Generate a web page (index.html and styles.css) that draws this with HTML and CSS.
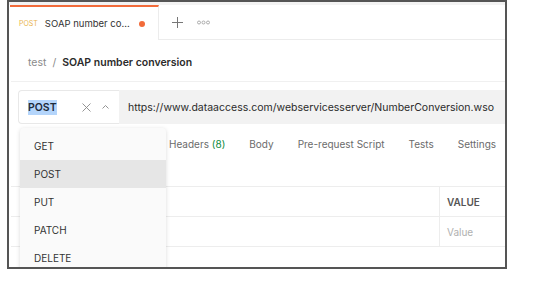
FILE: index.html
```html
<!DOCTYPE html>
<html lang="en">
<head>
    <meta charset="UTF-8">
    <title>SOAP number conversion</title>
    <link rel="stylesheet" href="styles.css">
</head>
<body>
    <div class="frame">
        <div class="tabbar">
            <div class="tab">
                <span class="tab-method">POST</span>
                <span class="tab-name">SOAP number co...</span>
                <span class="tab-dot"></span>
            </div>
            <div class="tab-actions">
                <svg class="plus" width="11" height="11" viewBox="0 0 11 11"><path d="M5.5 0v11M0 5.5h11" stroke="#777" stroke-width="1"/></svg>
                <svg class="more" width="13" height="5" viewBox="0 0 13 5"><circle cx="2" cy="2.5" r="1.5" fill="none" stroke="#999" stroke-width="0.8"/><circle cx="6.5" cy="2.5" r="1.5" fill="none" stroke="#999" stroke-width="0.8"/><circle cx="11" cy="2.5" r="1.5" fill="none" stroke="#999" stroke-width="0.8"/></svg>
            </div>
        </div>

        <div class="workspace">
            <div class="breadcrumb">
                <span class="crumb-parent">test</span>
                <span class="crumb-sep">/</span>
                <span class="crumb-current">SOAP number conversion</span>
            </div>

            <div class="urlrow">
                <div class="method">
                    <span class="method-name">POST</span>
                    <svg class="clear" width="9" height="9" viewBox="0 0 9 9"><path d="M0.5 0.5l8 8M8.5 0.5l-8 8" stroke="#888" stroke-width="0.9"/></svg>
                    <svg class="caret" width="7" height="4" viewBox="0 0 7 4"><path d="M0.5 3.5L3.5 0.5L6.5 3.5" fill="none" stroke="#888" stroke-width="0.9"/></svg>
                </div>
                <div class="url">https://www.dataaccess.com/webservicesserver/NumberConversion.wso</div>
            </div>

            <div class="reqtabs">
                <span>Headers <span class="count">(8)</span></span>
                <span>Body</span>
                <span>Pre-request Script</span>
                <span>Tests</span>
                <span>Settings</span>
            </div>

            <div class="table">
                <div class="row">
                    <div class="cell key"></div>
                    <div class="cell val head">VALUE</div>
                </div>
                <div class="row">
                    <div class="cell key"></div>
                    <div class="cell val placeholder">Value</div>
                </div>
            </div>

            <ul class="dropdown">
                <li>GET</li>
                <li class="active">POST</li>
                <li>PUT</li>
                <li>PATCH</li>
                <li>DELETE</li>
            </ul>
        </div>
    </div>
</body>
</html>
```

FILE: styles.css
```css
body {
    margin: 0;
    background: #fff;
    font-family: Inter, "Noto Sans", sans-serif;
    color: #333;
}
.frame {
    box-sizing: border-box;
    width: 500px;
    height: 269px;
    margin-left: 7px;
    border: 2px solid #555;
    overflow: hidden;
}
.tabbar {
    display: flex;
    height: 38px;
    border-top: 3px solid #f3f3f3;
    box-sizing: border-box;
}
.tab {
    box-sizing: border-box;
    display: flex;
    align-items: center;
    width: 149px;
    margin-left: 1px;
    padding-left: 9px;
    border-top: 2px solid #f26b3a;
    border-right: 1px solid #ececec;
    background: #fff;
}
.tab-method {
    font-size: 7px;
    color: #e9b44c;
    margin-right: 7px;
}
.tab-name {
    font-size: 9.5px;
    color: #333;
}
.tab-dot {
    width: 6px;
    height: 6px;
    border-radius: 50%;
    background: #f26b3a;
    margin-left: 9px;
}
.tab-actions {
    flex: 1;
    display: flex;
    align-items: center;
    padding-left: 13px;
    gap: 14px;
    border-bottom: 1px solid #ececec;
}
.workspace {
    position: relative;
    margin-left: 2px;
}
.breadcrumb {
    height: 42px;
    box-sizing: border-box;
    display: flex;
    align-items: center;
    padding-left: 17px;
    padding-top: 3px;
    font-size: 10.5px;
    border-bottom: 1px solid #f0f0f0;
}
.crumb-parent, .crumb-sep {
    color: #8a8a8a;
}
.crumb-sep {
    margin: 0 6px;
}
.crumb-current {
    font-weight: 600;
    color: #2b2b2b;
}
.urlrow {
    display: flex;
    height: 34px;
    margin: 8px 0 0 7px;
}
.method {
    box-sizing: border-box;
    width: 101px;
    display: flex;
    align-items: center;
    padding-left: 9px;
    border: 1px solid #e8e8e8;
    border-right: none;
    border-radius: 4px 0 0 4px;
    background: #fff;
}
.method-name {
    font-size: 10.5px;
    font-weight: 600;
    color: #1e2b3a;
    background: #b4d5fb;
    padding: 1px 0;
}
.clear {
    margin-left: 25px;
}
.caret {
    margin-left: 11px;
}
.url {
    flex: 1;
    display: flex;
    align-items: center;
    padding-left: 9px;
    background: #f2f2f2;
    font-size: 10.5px;
    color: #2b2b2b;
    white-space: nowrap;
}
.reqtabs {
    display: flex;
    gap: 24px;
    height: 38px;
    align-items: center;
    padding-left: 158px;
    padding-top: 2px;
    box-sizing: border-box;
    font-size: 10px;
    color: #6b6b6b;
    white-space: nowrap;
}
.count {
    color: #0c8a3c;
}
.table {
    margin-top: 24px;
    border-top: 1px solid #ededed;
}
.row {
    display: flex;
    height: 29px;
    border-bottom: 1px solid #ededed;
}
.cell {
    display: flex;
    align-items: center;
    font-size: 10px;
}
.key {
    width: 428px;
    border-right: 1px solid #ededed;
}
.val {
    padding-left: 7px;
}
.head {
    font-weight: 600;
    color: #555;
}
.placeholder {
    color: #b0b0b0;
}
.dropdown {
    position: absolute;
    left: 9px;
    top: 88px;
    width: 146px;
    margin: 0;
    padding: 4px 0 0;
    list-style: none;
    background: #fafafa;
    border-radius: 4px;
    box-shadow: 0 1px 4px rgba(0, 0, 0, 0.15);
    height: 160px;
}
.dropdown li {
    height: 28px;
    line-height: 28px;
    padding-left: 14px;
    font-size: 10px;
    color: #333;
}
.dropdown li.active {
    background: #e6e6e6;
}
```
